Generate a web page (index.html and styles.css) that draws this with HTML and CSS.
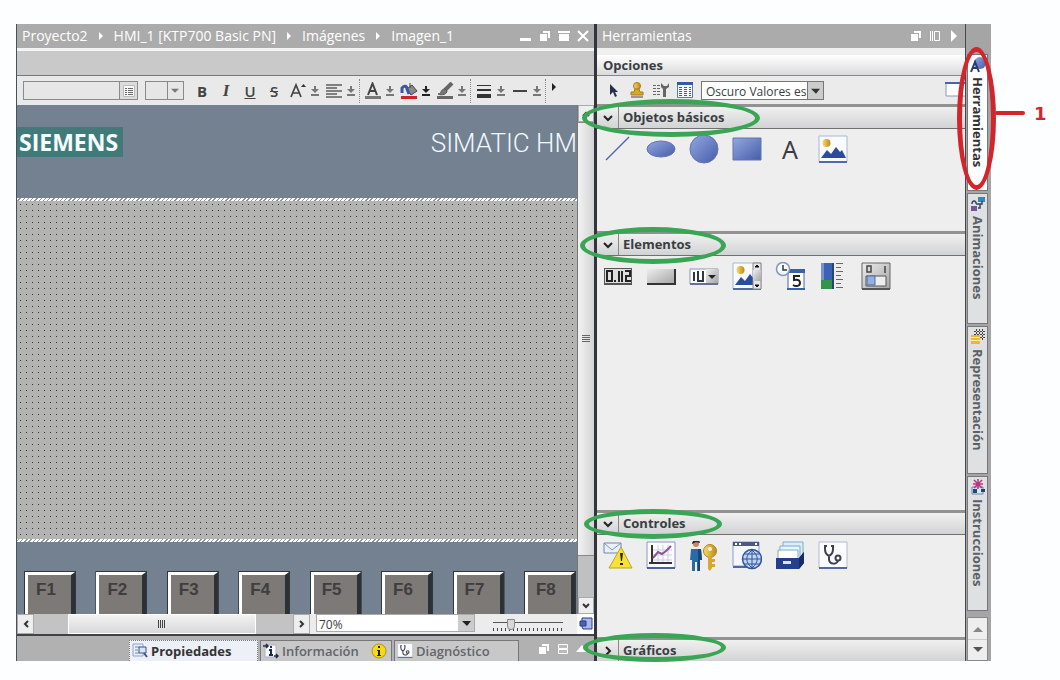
FILE: index.html
```html
<!DOCTYPE html>
<html lang="es">
<head>
<meta charset="utf-8">
<title>Proyecto2 - HMI_1</title>
<link rel="stylesheet" href="styles.css">
</head>
<body>
<svg class="defs" aria-hidden="true">
  <defs>
    <linearGradient id="blue" x1="0" y1="0" x2="1" y2="1"><stop offset="0" stop-color="#93a9e0"/><stop offset="1" stop-color="#465ca8"/></linearGradient>
    <linearGradient id="gold" x1="0" y1="0" x2="1" y2="0"><stop offset="0" stop-color="#f6d968"/><stop offset="1" stop-color="#bf8a18"/></linearGradient>
    <linearGradient id="gray" x1="0" y1="0" x2="1" y2="1"><stop offset="0" stop-color="#ededed"/><stop offset="1" stop-color="#a4a4a4"/></linearGradient>
    <symbol id="drop" viewBox="0 0 10 12"><path d="M4 1h2v3h3L5 8 1 4h3zM1 9h8v2H1z" fill="currentColor"/></symbol>
    <symbol id="crumb" viewBox="0 0 6 8"><path d="M1 0l4 4-4 4z" fill="#fff"/></symbol>
    <symbol id="restore" viewBox="0 0 12 12"><path d="M1 4h7v7H1zM4 1h7v7H9V3H4z" fill="#fff"/></symbol>
    <symbol id="picture" viewBox="0 0 30 30"><path d="M1 1h28v26H1z" fill="#f8fafe" stroke="#aab6d2"/><path d="M1 27h28" stroke="#5069a8" stroke-width="2"/><circle cx="8.500" cy="8" r="4" fill="url(#gold)"/><path d="M3 23l6-8 4 4 5-7 4 5 2-2 4 8z" fill="#2c4b9c"/></symbol>
    <symbol id="steth" viewBox="0 0 30 30"><path d="M1 1h28v26H1z" fill="#fbfbff" stroke="#b3bad2"/><path d="M1 27h28" stroke="#5368a5" stroke-width="2"/><path d="M9 5H7v3c0 4 2 6 4 7 2-1 4-3 4-7V5h-2M11 15v3c0 6 9 6 9 1" fill="none" stroke="#3c4250" stroke-width="2"/><circle cx="20" cy="17" r="2.500" fill="#fff" stroke="#3c4250" stroke-width="2"/></symbol>
  </defs>
</svg>
<div class="window">
  <main class="editor">
    <header class="titlebar">
      <nav class="crumbs" aria-label="Ruta">
        <span>Proyecto2</span><svg><use href="#crumb"/></svg>
        <span>HMI_1 [KTP700 Basic PN]</span><svg><use href="#crumb"/></svg>
        <span>Imágenes</span><svg><use href="#crumb"/></svg>
        <span>Imagen_1</span>
      </nav>
      <div class="window-buttons">
        <button aria-label="Minimizar"><svg viewBox="0 0 12 12"><path d="M0 8h11v3H0z" fill="#fff"/></svg></button>
        <button aria-label="Restaurar"><svg><use href="#restore"/></svg></button>
        <button aria-label="Maximizar"><svg viewBox="0 0 12 12"><path d="M0 1h12v2H0zM1 4h10v7H1z" fill="#fff"/></svg></button>
        <button aria-label="Cerrar"><svg viewBox="0 0 12 12"><path d="M1 1l10 10M11 1L1 11" stroke="#fff" stroke-width="2"/></svg></button>
      </div>
    </header>
    <div class="band"></div>
    <div class="format-bar">
      <div class="font-field">
        <input type="text" aria-label="Fuente">
        <button aria-label="Elegir fuente"><svg viewBox="0 0 14 14"><path d="M1.500 1.500h11v11h-11z" fill="#f8f8f8" stroke="#bbb"/><path d="M3 4.500h2M6 4.500h5M3 6.500h2M6 6.500h5M3 8.500h2M6 8.500h5M3 10.500h2M6 10.500h5" stroke="#666"/></svg></button>
      </div>
      <select class="size-select" aria-label="Tamaño"><option></option></select>
      <button class="tool letter bold">B</button>
      <button class="tool letter italic">I</button>
      <button class="tool letter under">U</button>
      <button class="tool letter strike">S</button>
      <button class="tool split" aria-label="Tamaño de letra"><svg class="glyph" viewBox="0 0 18 18"><path d="M2 15L7 3l5 12M4 11h6" fill="none" stroke="#444" stroke-width="1.700"/><path d="M12 5l2.500-3L17 5z" fill="#333"/></svg><svg class="drop"><use href="#drop"/></svg></button>
      <button class="tool split" aria-label="Alineación"><svg class="glyph" viewBox="0 0 18 18"><path d="M1 2h16v2H1zM1 5h11v2H1zM1 8h16v2H1zM1 11h11v2H1zM1 14h16v2H1z" fill="#808080"/></svg><svg class="drop"><use href="#drop"/></svg></button>
      <i class="sep"></i>
      <button class="tool split" aria-label="Color de texto"><svg class="glyph" viewBox="0 0 18 18"><path d="M4 13L8.500 1.500 13 13M5.500 9h6" fill="none" stroke="#444" stroke-width="2"/><path d="M1 14h16v3H1z" fill="#777"/></svg><svg class="drop"><use href="#drop"/></svg></button>
      <button class="tool split strong" aria-label="Color de relleno"><svg class="glyph" viewBox="0 0 18 18"><path d="M7 7l5-4 5 6-6 4z" fill="#8a8a8a" stroke="#444"/><path d="M10 6V1" stroke="#444"/><path d="M2 11V6c2-3 5-2 5 1l2 5" fill="none" stroke="#3c55a5" stroke-width="3"/><path d="M1 14h16v3H1z" fill="#d02028"/></svg><svg class="drop"><use href="#drop"/></svg></button>
      <button class="tool split" aria-label="Color de línea"><svg class="glyph" viewBox="0 0 18 18"><path d="M16 1L9 8" stroke="#666" stroke-width="4"/><path d="M9 7c-5 0-3 5-7 5 4 2 9 0 9-3z" fill="#777" stroke="#555"/><path d="M1 14h16v3H1z" fill="#666"/></svg><svg class="drop"><use href="#drop"/></svg></button>
      <i class="sep"></i>
      <button class="tool split" aria-label="Grosor"><svg class="glyph" viewBox="0 0 18 18"><path d="M2 3h14v1H2zM2 7h14v2H2zM2 12h14v4H2z" fill="#333"/></svg><svg class="drop"><use href="#drop"/></svg></button>
      <button class="tool split" aria-label="Estilo de línea"><svg class="glyph" viewBox="0 0 18 18"><path d="M2 8h14v2H2z" fill="#444"/></svg><svg class="drop"><use href="#drop"/></svg></button>
      <i class="sep"></i>
      <button class="tool more" aria-label="Más"><svg viewBox="0 0 6 8"><path d="M1 0l4 4-4 4z" fill="#222"/></svg></button>
    </div>
    <div class="work">
      <div class="canvas">
        <div class="device-head"><span class="brand">SIEMENS</span><span class="model">SIMATIC HM</span></div>
        <div class="screen"></div>
        <div class="keys">
          <button>F1</button><button>F2</button><button>F3</button><button>F4</button><button>F5</button><button>F6</button><button>F7</button><button>F8</button>
        </div>
      </div>
      <div class="vscroll">
        <button class="end" aria-label="Subir"><svg viewBox="0 0 10 10"><path d="M2 7l3-3 3 3" fill="none" stroke="#333" stroke-width="2"/></svg></button>
        <div class="thumb"><svg viewBox="0 0 8 8"><path d="M0 0h8v1H0zM0 2h8v1H0zM0 4h8v1H0zM0 6h8v1H0z" fill="#666"/></svg></div>
        <div class="rest"></div>
        <button class="end" aria-label="Bajar"><svg viewBox="0 0 10 10"><path d="M2 3l3 3 3-3" fill="none" stroke="#333" stroke-width="2"/></svg></button>
      </div>
    </div>
    <div class="zoom-row">
      <div class="hscroll">
        <button class="end" aria-label="Izquierda"><svg viewBox="0 0 10 10"><path d="M7 2L4 5l3 3" fill="none" stroke="#333" stroke-width="2"/></svg></button>
        <div class="before"></div>
        <div class="thumb"><svg viewBox="0 0 8 8"><path d="M0 0h1v8H0zM2 0h1v8H2zM4 0h1v8H4zM6 0h1v8H6z" fill="#444"/></svg></div>
        <div class="after"></div>
        <button class="end" aria-label="Derecha"><svg viewBox="0 0 10 10"><path d="M3 2l3 3-3 3" fill="none" stroke="#333" stroke-width="2"/></svg></button>
      </div>
      <select class="zoom-select" aria-label="Zoom"><option>70%</option></select>
      <input class="zoom-slider" type="range" value="22" aria-label="Nivel de zoom">
      <button class="fit" aria-label="Vista general"><svg viewBox="0 0 14 14"><path d="M3 1h10v11H4l-1-2z" fill="#a9b8ee" stroke="#2a3d82"/><path d="M1 4h6v5H1z" fill="#4a62bb" stroke="#2a3d82"/></svg></button>
    </div>
    <div class="inspector">
      <div class="inspector-tabs">
        <button class="current"><svg viewBox="0 0 16 16"><path d="M1 1h10v12H1z" fill="#e8efff" stroke="#8ea4cf"/><path d="M3 4h5M3 7h3M3 10h4" stroke="#6b83b5"/><path d="M7 4h7v6H7z" fill="#d7e4f5" stroke="#3f5584"/><path d="M12 10l3 4" stroke="#3f5584" stroke-width="2"/></svg>Propiedades</button>
        <button><svg viewBox="0 0 16 16"><path d="M2 2h11v12H2z" fill="#fafaff" stroke="#a8b2cc"/><path d="M0 3h5M3 1l2 2-2 2M11 13h4M13 11l2 2-2 2" fill="none" stroke="#1e2b50" stroke-width="1.500"/><path d="M7 3h2v2H7zM6 6h3v5h1v2H6v-2h1V8H6z" fill="#1e2b50"/></svg>Información<svg class="note" viewBox="0 0 16 16"><circle cx="8" cy="8" r="7" fill="#f5da18" stroke="#b29412"/><path d="M7 3h2v2H7zM6 7h3v5h1v1H6v-1h1V8H6z" fill="#222"/></svg></button>
        <button><svg viewBox="0 0 30 30"><use href="#steth"/></svg>Diagnóstico</button>
      </div>
      <div class="window-buttons">
        <button aria-label="Flotar"><svg><use href="#restore"/></svg></button>
        <button aria-label="Dividir"><svg viewBox="0 0 12 12"><path d="M1.500 1.500h9v4h-9zM1.500 6.500h9v4h-9z" fill="#bbb" stroke="#fff"/></svg></button>
        <button aria-label="Expandir"><svg viewBox="0 0 12 12"><path d="M0 9l6-7 6 7z" fill="#fff"/></svg></button>
      </div>
    </div>
  </main>

  <aside class="panel">
    <header class="titlebar">
      <span>Herramientas</span>
      <div class="window-buttons">
        <button aria-label="Flotar"><svg><use href="#restore"/></svg></button>
        <button aria-label="Columnas"><svg viewBox="0 0 12 12"><path d="M1.500 1v10M3.500 1v10M5.500 1.500h5v9h-5z" fill="none" stroke="#fff"/></svg></button>
        <button aria-label="Ocultar"><svg viewBox="0 0 12 12"><path d="M3 0l6 6-6 6z" fill="#fff"/></svg></button>
      </div>
    </header>
    <h2 class="options">Opciones</h2>
    <div class="option-bar">
      <button aria-label="Seleccionar"><svg viewBox="0 0 16 16"><path d="M5 2v11l3-3 2 5 2-1-2-4h3z" fill="#26304a"/></svg></button>
      <button aria-label="Sello"><svg viewBox="0 0 16 16"><circle cx="8" cy="4" r="3.500" fill="url(#gold)" stroke="#a97b14"/><path d="M6 7h4l1 3h3v3H2v-3h3z" fill="#d9a928" stroke="#a97b14"/><path d="M2 15h12" stroke="#444"/></svg></button>
      <button aria-label="Ajustes"><svg viewBox="0 0 16 16"><path d="M0 3.500h7M0 6.500h7M0 9.500h7M0 12.500h7" stroke="#666" stroke-dasharray="3 1"/><path d="M8 1v4l2 2v8h3V7l3-2V1l-2 3h-3z" fill="#666"/></svg></button>
      <button aria-label="Tabla"><svg viewBox="0 0 16 16"><path d="M.5 1.500h15v14H.5z" fill="#f5f8ff" stroke="#5b79b4"/><path d="M0 0h16v3H0z" fill="#3659a3"/><path d="M2 5.500h3M7 5.500h3M12 5.500h2M2 7.500h3M7 7.500h3M12 7.500h2M2 9.500h3M7 9.500h3M12 9.500h2M2 11.500h3M7 11.500h3M12 11.500h2M2 13.500h3M7 13.500h3M12 13.500h2" stroke="#405c91"/></svg></button>
      <select aria-label="Estilo"><option>Oscuro Valores es</option></select>
      <button class="view" aria-label="Vista"><svg viewBox="0 0 20 16"><path d="M1 1h22v13H1z" fill="#fff" stroke="#8a96c5"/><path d="M0 1h20" stroke="#4b61a8" stroke-width="2"/></svg></button>
    </div>
    <section>
      <h3><button aria-label="Contraer"><svg viewBox="0 0 10 10"><path d="M1 3l4 4 4-4" fill="none" stroke="#222" stroke-width="2"/></svg></button><span>Objetos básicos</span><i class="mark mark-basic"></i></h3>
      <div class="items basic">
        <svg viewBox="0 0 30 30"><path d="M3 25L26 2" stroke="#5267ac" stroke-width="1.500"/></svg>
        <svg viewBox="0 0 30 30"><ellipse cx="15" cy="14" rx="14" ry="8" fill="url(#blue)" stroke="#6075b5"/></svg>
        <svg viewBox="0 0 30 30"><circle cx="15" cy="14" r="14" fill="url(#blue)" stroke="#6075b5"/></svg>
        <svg viewBox="0 0 30 30"><path d="M1 3h28v22H1z" fill="url(#blue)" stroke="#6075b5"/></svg>
        <span class="text-object">A</span>
        <svg viewBox="0 0 30 30"><use href="#picture"/></svg>
      </div>
    </section>
    <section class="grow">
      <h3><button aria-label="Contraer"><svg viewBox="0 0 10 10"><path d="M1 3l4 4 4-4" fill="none" stroke="#222" stroke-width="2"/></svg></button><span>Elementos</span><i class="mark mark-elements"></i></h3>
      <div class="items">
        <svg viewBox="0 0 30 30"><path d="M1 6h28v17H1z" fill="#555"/><path d="M2 7h26v14H2z" fill="#dedede"/><path d="M4 9h5v10H4zM16 9v11M19 9v11M22 9h5v5h-4v5h5" fill="none" stroke="#222" stroke-width="2"/><path d="M11 18h2v2h-2z" fill="#222"/></svg>
        <svg viewBox="0 0 30 30"><path d="M1 7h28v15H1z" fill="url(#gray)"/><path d="M1 22h28V7" fill="none" stroke="#333" stroke-width="2"/></svg>
        <svg viewBox="0 0 30 30"><path d="M1 7h28v15H1z" fill="#fff" stroke="#8595bd"/><path d="M17 7h12v15H17z" fill="url(#gray)"/><path d="M1 22h28" stroke="#647192" stroke-width="2"/><path d="M5 10v9M9 9v10h5V9" fill="none" stroke="#303747" stroke-width="2"/><path d="M19 13h8l-4 4z" fill="#222"/></svg>
        <svg viewBox="0 0 30 30"><use href="#picture"/><path d="M21 1h8v26h-8z" fill="#e5e5e5" stroke="#888"/><path d="M23 5l2-2 2 2zM23 23l2 2 2-2z" fill="#111" stroke="#111"/><path d="M21 8h8v11h-8z" fill="url(#gray)"/></svg>
        <svg viewBox="0 0 30 30"><path d="M13 8h16v19H13z" fill="#fff" stroke="#4966a4"/><path d="M12 7h18v4H12z" fill="#3c60a7"/><path d="M12 27h18" stroke="#3c60a7" stroke-width="2"/><path d="M25 14h-6v4c5-1 6 1 6 3 0 3-4 4-7 2" fill="none" stroke="#222" stroke-width="2"/><circle cx="8" cy="7" r="6.500" fill="#f6f9ff" stroke="#8296c1" stroke-width="1.500"/><path d="M8 3v5h4" fill="none" stroke="#334" stroke-width="1.500"/></svg>
        <svg viewBox="0 0 30 30"><path d="M3 1h13v26H3z" fill="#3c61b5"/><path d="M3 18h13v9H3z" fill="#35934b"/><path d="M3 1h3v17H3z" fill="#7891ce"/><path d="M14 1h2v26h-2z" fill="#28427e"/><path d="M18 1.500h7M18 5.500h5M18 9.500h7M18 13.500h5M18 17.500h7M18 21.500h5M18 25.500h7" stroke="#666"/></svg>
        <svg viewBox="0 0 30 30"><path d="M1 1h28v26H1z" fill="url(#gray)" stroke="#666"/><path d="M6 4h4v6H6zM24 4v7" fill="none" stroke="#444" stroke-width="1.500"/><path d="M5 14h20v10H5z" fill="#eee" stroke="#555"/><path d="M6 14h8v9H6z" fill="#94b0e2" stroke="#506a9b"/><path d="M1 27h28" stroke="#555" stroke-width="2"/></svg>
      </div>
    </section>
    <section>
      <h3><button aria-label="Contraer"><svg viewBox="0 0 10 10"><path d="M1 3l4 4 4-4" fill="none" stroke="#222" stroke-width="2"/></svg></button><span>Controles</span><i class="mark mark-controls"></i></h3>
      <div class="items">
        <svg viewBox="0 0 30 30"><path d="M1 2h17v10H1z" fill="#eaf1fc" stroke="#6e85b6"/><path d="M1 2l8 7 9-7" fill="none" stroke="#7e94be"/><path d="M18 6l11 21H6z" fill="#f6e232" stroke="#bba61c"/><path d="M17 12h3l-1 8h-1zM17 22h3v2h-3z" fill="#222"/></svg>
        <svg viewBox="0 0 30 30"><path d="M1 1h28v26H1z" fill="#fafaff" stroke="#8998c2"/><path d="M1 27h28" stroke="#4b609e" stroke-width="2"/><path d="M7 9h19M7 14h19M7 19h19M12 4v19M17 4v19M22 4v19" stroke="#cbd1e2"/><path d="M6 4v19M3 22h23" stroke="#333" stroke-width="2"/><path d="M7 17l5-6 4 2 4-3 5-5" fill="none" stroke="#8a5590" stroke-width="2"/></svg>
        <svg viewBox="0 0 30 30"><circle cx="7" cy="3" r="3" fill="#bd8866"/><path d="M3 3c0-5 8-5 8-1L7 1z" fill="#31241d"/><path d="M2 8h10l1 11h-2v11H8v-9H6v9H3V19H1z" fill="#286ca5"/><path d="M9 8h3l1 11h-2v11H9z" fill="#174776"/><circle cx="21" cy="10" r="6.500" fill="url(#gold)" stroke="#b48420"/><circle cx="21" cy="8" r="2" fill="#fff6d8"/><path d="M19 16h4v11l-2 3-2-2zM23 18h3v3h-3zM23 23h3v3h-3z" fill="#d9a72d"/></svg>
        <svg viewBox="0 0 30 30"><path d="M1 1h26v24H1z" fill="#f4f6fc" stroke="#8d9aca"/><path d="M1 1h26v4H1z" fill="#4b5980"/><path d="M3 3h2M7 3h2M23 3h2" stroke="#fff" stroke-width="2"/><path d="M1 26h14" stroke="#4769ad" stroke-width="2"/><circle cx="20" cy="18" r="9.500" fill="#bdd4f5" stroke="#315598" stroke-width="1.500"/><path d="M11 18h18M13 13h14M13 23h14M20 9v18M20 9c-7 6-7 12 0 18M20 9c7 6 7 12 0 18" fill="none" stroke="#315598"/></svg>
        <svg viewBox="0 0 30 30"><path d="M8 1h20v16H8z" fill="#dceefa" stroke="#7faac7"/><path d="M5 5h20v14H5z" fill="#e8f6fd" stroke="#7faac7"/><path d="M3 9h20v11H3z" fill="#fff" stroke="#7faac7"/><path d="M1 17h23l5-6v11l-5 6H1z" fill="#243f8c"/><path d="M24 17l5-6v11l-5 6z" fill="#182c67"/><path d="M8 20h8v3H8z" fill="#dbe4ff"/></svg>
        <svg viewBox="0 0 30 30"><use href="#steth"/></svg>
      </div>
    </section>
    <section>
      <h3 class="closed"><button aria-label="Expandir"><svg viewBox="0 0 10 10"><path d="M3 1l4 4-4 4" fill="none" stroke="#222" stroke-width="2"/></svg></button><span>Gráficos</span><i class="mark mark-graphics"></i></h3>
    </section>
  </aside>

  <nav class="side" aria-label="Paletas">
    <button class="side-tab current"><svg viewBox="0 0 16 16"><circle cx="10" cy="6" r="6" fill="url(#blue)"/><path d="M1 15L5 5l4 10M2 11h6" fill="none" stroke="#263c79" stroke-width="2"/></svg>Herramientas</button>
    <button class="side-tab"><svg viewBox="0 0 16 16"><path d="M8 1h7v5H8z" fill="#3787b5"/><path d="M1 10h6v5H1z" fill="#77539a"/><path d="M2 8c0-5 5-3 4 0M6 8h6V5M10 8v4H8" fill="none" stroke="#34435d" stroke-width="1.500"/></svg>Animaciones</button>
    <button class="side-tab"><svg viewBox="0 0 16 16"><path d="M4 2.500h12M4 5.500h12M4 8.500h12M6.500 0v12M9.500 0v12M12.500 0v12" stroke="#444" stroke-dasharray="2 1"/><path d="M1 6h9v9H1z" fill="#e8b83c"/><path d="M1 8.500h9M1 11.500h9" stroke="#fff0a7"/></svg>Representación</button>
    <button class="side-tab"><svg viewBox="0 0 16 16"><path d="M2 8h11v7H2z" fill="#d5e7f7" stroke="#6b87ac"/><path d="M8 0v10M3 5h10M4 1l8 8M12 1L4 9" stroke="#b73580" stroke-width="1.500"/><path d="M3 10h4v4H3zM11 10h4v3h-4z" fill="#24466f"/></svg>Instrucciones</button>
    <div class="side-scroll">
      <button aria-label="Anterior"><svg viewBox="0 0 12 8"><path d="M1 7l5-5 5 5z" fill="#888"/></svg></button>
      <button aria-label="Siguiente"><svg viewBox="0 0 12 8"><path d="M1 1l5 5 5-5z" fill="#555"/></svg></button>
    </div>
    <div class="callout"><i class="ring"></i><i class="leader"></i><b>1</b></div>
  </nav>
</div>
</body>
</html>
```
FILE: styles.css
```css
* { box-sizing: border-box; }
body {
  margin: 0;
  min-height: 100vh;
  padding: 24px 69px 19px 16px;
  display: flex;
  background: #fdfeff;
  font: 13px/20px "Open Sans", "Noto Sans", sans-serif;
  color: #3a3d42;
}
.defs { position: absolute; width: 0; height: 0; }
button, input, select { font: inherit; color: inherit; margin: 0; padding: 0; border: 0; border-radius: 0; background: none; }
button { display: flex; align-items: center; justify-content: center; }
svg { display: block; flex: none; }
h2, h3 { margin: 0; font-size: 13px; }

.window {
  flex: 1;
  display: grid;
  grid-template-columns: minmax(0, 1fr) 371px 26px;
  background: #ababab;
}
.titlebar {
  display: flex;
  align-items: center;
  justify-content: space-between;
  height: 24px;
  padding: 0 5px;
  background: #ababab;
  color: #fff;
  font-size: 14px;
}
.window-buttons { display: flex; gap: 7px; }
.window-buttons svg { width: 12px; height: 12px; }

/* Editor */
.editor { display: flex; flex-direction: column; min-width: 0; border-left: 1px solid #4a5058; }
.crumbs { display: flex; align-items: center; gap: 10px; white-space: nowrap; }
.crumbs svg { width: 6px; height: 8px; }
.band { height: 28px; border-top: 3px solid #f4f4f4; border-bottom: 1px solid #777; background: #c9c9c9; }
.format-bar { display: flex; align-items: center; gap: 2px; height: 29px; padding: 0 6px; background: #e9e9e9; }
.font-field { display: flex; width: 115px; height: 19px; margin-right: 5px; border: 1px solid #8a8a8a; }
.font-field input { flex: 1; min-width: 0; background: #e6e6e6; }
.font-field button { width: 18px; border-left: 1px solid #8a8a8a; background: #dcdcdc; }
.font-field svg { width: 14px; height: 14px; }
.size-select, .zoom-select, .option-bar select { appearance: none; }
.size-select {
  width: 39px;
  height: 19px;
  margin-right: 5px;
  border: 1px solid #8a8a8a;
  background: url("data:image/svg+xml,%3Csvg xmlns='http://www.w3.org/2000/svg' width='16' height='18'%3E%3Cpath d='M.5 0v18' stroke='%23888'/%3E%3Cpath d='M4 7h8l-4 4z' fill='%23777'/%3E%3C/svg%3E") right center no-repeat, #e6e6e6;
}
.tool { width: 22px; height: 22px; }
.letter { font-size: 15px; font-weight: 600; color: #444; }
.bold { font-weight: 700; }
.italic { font-family: "Liberation Serif", serif; font-style: italic; font-weight: 700; font-size: 17px; }
.under { text-decoration: underline; }
.strike { text-decoration: line-through; }
.split { width: 34px; color: #777; }
.split.strong { color: #222; }
.split .glyph { width: 18px; height: 18px; margin-right: 3px; }
.split .drop { width: 10px; height: 12px; }
.sep { height: 24px; border-left: 1px dotted #888; }
.more { width: 12px; align-items: flex-start; padding-top: 3px; }
.more svg { width: 6px; height: 8px; }

.work { flex: 1; display: flex; min-height: 0; }
.canvas { flex: 1; min-width: 0; display: flex; flex-direction: column; background: #738191; }
.device-head { display: flex; align-items: flex-start; justify-content: space-between; height: 93px; padding-top: 22px; }
.brand { padding: 0 5px 0 2px; background: #427a7a; color: #f4ffff; font: 700 23px/30px "Open Sans", sans-serif; }
.model { white-space: nowrap; color: #f2f8ff; font: 300 26px/32px Roboto, sans-serif; }
.screen {
  flex: 1;
  border: solid transparent;
  border-width: 3px 0;
  background:
    conic-gradient(from 270deg at 1px 1px, #333 90deg, transparent 0) 3px 3px / 6px 6px padding-box,
    linear-gradient(#b3b3b1, #b3b3b1) padding-box,
    repeating-linear-gradient(135deg, #fff 0 2px, #8c959f 2px 3px) border-box;
}
.keys { display: flex; justify-content: space-between; height: 72px; padding: 30px 2px 0 8px; }
.keys button {
  width: 50px;
  padding: 5px 0 0 8px;
  align-items: flex-start;
  justify-content: flex-start;
  border: solid #fff;
  border-width: 3px 4px 0 3px;
  border-right-color: #2d3135;
  outline: 1px solid #30363d;
  clip-path: inset(-1px -1px 0 -1px);
  background: #7c7976;
  color: #3f3d3e;
  font: 700 17px/20px "Liberation Sans", Arial, sans-serif;
}
.vscroll { display: flex; flex-direction: column; width: 17px; border-left: 1px solid #777; background: #bfc0c2; }
.end { background: #eee; border: 1px solid #fff; outline: 1px solid #aaa; outline-offset: -1px; }
.end svg { width: 10px; height: 10px; }
.vscroll .end { height: 17px; }
.vscroll .thumb { flex: 1; border-top: 1px solid #888; border-bottom: 1px solid #888; background: linear-gradient(90deg, #f2f2f2, #d4d4d4); }
.vscroll .rest { height: 41px; }
.thumb { display: flex; align-items: center; justify-content: center; }
.thumb svg { width: 8px; height: 8px; }

.zoom-row { display: flex; height: 22px; border-bottom: 2px solid #3f4246; background: #ececec; }
.hscroll { flex: 1; display: flex; background: #c3c3c3; }
.hscroll .end { width: 17px; }
.hscroll .before { flex: 34; }
.hscroll .thumb { flex: 188; border: 1px solid #fff; background: linear-gradient(#f3f3f3, #d8d8d8); }
.hscroll .after { flex: 37; }
.zoom-select {
  width: 159px;
  margin: 0 18px 2px 6px;
  padding: 0 2px;
  border: 1px solid #aaa;
  font-size: 12px;
  background: url("data:image/svg+xml,%3Csvg xmlns='http://www.w3.org/2000/svg' width='16' height='18'%3E%3Cpath d='M0 0h16v18H0z' fill='%23ccc'/%3E%3Cpath d='M4 7h9l-4 5z' fill='%23222'/%3E%3C/svg%3E") right center no-repeat, #fff;
}
.zoom-slider {
  appearance: none;
  width: 70px;
  margin-right: 14px;
  background:
    linear-gradient(#555, #555) 0 8px / 100% 1px no-repeat,
    repeating-linear-gradient(90deg, #444 0 1px, transparent 1px 4px) 0 14px / 100% 3px no-repeat;
}
.zoom-slider::-webkit-slider-thumb {
  appearance: none;
  width: 8px;
  height: 11px;
  background: #d8d8d8;
  border: 1px solid #888;
  border-radius: 0 0 4px 4px;
}
.fit { width: 17px; background: #fff; }
.fit svg { width: 14px; height: 14px; }

.inspector { display: flex; justify-content: space-between; align-items: center; height: 25px; padding: 0 6px 0 112px; background: #b1b1b1; }
.inspector-tabs { display: flex; gap: 2px; align-self: flex-end; }
.inspector-tabs button {
  width: 132px;
  height: 21px;
  gap: 3px;
  padding-left: 2px;
  justify-content: flex-start;
  border: 1px solid #777;
  border-bottom: 0;
  background: #c8c8c8;
  color: #62656a;
  font-weight: 600;
}
.inspector-tabs .current { width: 129px; border: 1px dotted #777; border-bottom: 0; background: #edf0f6; color: #333; font-weight: 700; }
.inspector-tabs button:last-child { width: 125px; }
.inspector-tabs svg { width: 16px; height: 16px; }
.inspector-tabs .note { margin-left: auto; margin-right: 4px; }

/* Tool palette */
.panel { display: flex; flex-direction: column; border-left: 3px solid #32343e; background: #eee; }
.options {
  height: 28px;
  padding: 7px 6px 0;
  border-bottom: 1px solid #888;
  background: linear-gradient(#f0f0f0 0 7px, #fff 7px, #dadbdc);
  font-weight: 700;
}
.option-bar { display: flex; align-items: center; gap: 8px; height: 28px; padding-left: 8px; background: #ebebeb; }
.option-bar svg { width: 16px; height: 16px; }
.option-bar select {
  width: 123px;
  height: 19px;
  padding-left: 4px;
  border: 1px solid #777;
  font-size: 12px;
  background: url("data:image/svg+xml,%3Csvg xmlns='http://www.w3.org/2000/svg' width='16' height='18'%3E%3Cpath d='M0 0h16v18H0z' fill='%23ccc'/%3E%3Cpath d='M.5 0v18' stroke='%23777'/%3E%3Cpath d='M4 7h9l-4 5z' fill='%23333'/%3E%3C/svg%3E") right center no-repeat, #fff;
}
.option-bar .view { margin-left: auto; }
.option-bar .view svg { width: 20px; }
section { border-top: 3px solid #929292; }
h3 { position: relative; display: flex; height: 22px; border-bottom: 1px solid #707070; background: linear-gradient(#f0f0f0, #d2d3d4); }
h3 button { width: 22px; border-right: 1px solid #888; }
h3 button svg { width: 10px; height: 10px; }
h3 span { padding-left: 4px; font-weight: 700; line-height: 21px; }
h3.closed { height: 21px; border-bottom: 0; }
.grow { flex: 1; }
.items { display: flex; gap: 13px; min-height: 102px; padding: 6px 6px 0; }
.items svg { width: 30px; height: 30px; }
.text-object { width: 30px; text-align: center; font: 25px/28px "Noto Sans", sans-serif; }
.mark { position: absolute; z-index: 2; border: 5px solid #3aa655; border-radius: 50%; }
.mark-basic { left: -15px; top: -8px; width: 178px; height: 38px; }
.mark-elements { left: -17px; top: -7px; width: 146px; height: 37px; }
.mark-controls { left: -13px; top: -4px; width: 138px; height: 30px; }
.mark-graphics { left: -14px; top: -7px; width: 143px; height: 29px; }

/* Vertical palette tabs */
.side { position: relative; display: flex; flex-direction: column; gap: 2px; padding: 30px 3px 0 1px; border-left: 1px solid #44474c; background: #a5a5a5; }
.side-tab {
  writing-mode: vertical-rl;
  justify-content: flex-start;
  gap: 4px;
  padding: 2px 0 23px;
  border: 1px solid #777;
  background: #dfe0e1;
  color: #5b5f66;
  font-size: 13px;
  font-weight: 700;
}
.side-tab svg { width: 16px; height: 16px; }
.side-tab.current { background: #fff; color: #333; }
.side-scroll { margin-top: auto; border: 1px solid #888; background: #eee; }
.side-scroll button { width: 100%; height: 21px; }
.side-scroll button + button { border-top: 1px solid #ccc; }
.side-scroll svg { width: 12px; height: 8px; }
.callout { position: absolute; left: -9px; top: 23px; display: flex; align-items: center; height: 143px; color: #d2262c; }
.ring { width: 39px; height: 143px; border: 5px solid #d2262c; border-radius: 50%; }
.leader { width: 30px; height: 4px; margin: 0 9px 11px -1px; border-radius: 2px; background: #d2262c; }
.callout b { margin-bottom: 9px; font: 700 18px/20px "DejaVu Sans", sans-serif; }
```
